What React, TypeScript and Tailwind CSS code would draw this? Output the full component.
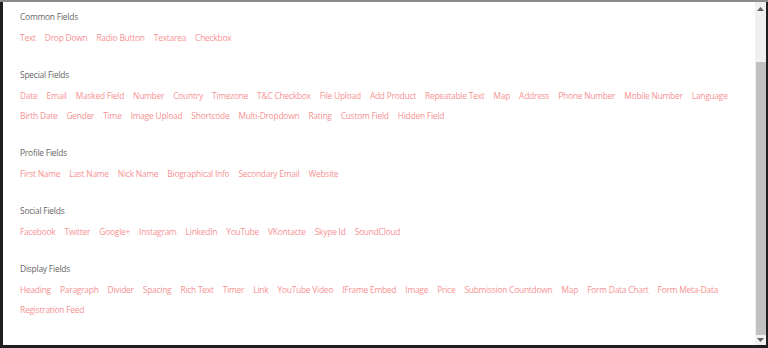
const sections: { title: string; rows: string[][] }[] = [
  {
    title: "Common Fields",
    rows: [["Text", "Drop Down", "Radio Button", "Textarea", "Checkbox"]],
  },
  {
    title: "Special Fields",
    rows: [
      [
        "Date",
        "Email",
        "Masked Field",
        "Number",
        "Country",
        "Timezone",
        "T&C Checkbox",
        "File Upload",
        "Add Product",
        "Repeatable Text",
        "Map",
        "Address",
        "Phone Number",
        "Mobile Number",
        "Language",
      ],
      [
        "Birth Date",
        "Gender",
        "Time",
        "Image Upload",
        "Shortcode",
        "Multi-Dropdown",
        "Rating",
        "Custom Field",
        "Hidden Field",
      ],
    ],
  },
  {
    title: "Profile Fields",
    rows: [
      ["First Name", "Last Name", "Nick Name", "Biographical Info", "Secondary Email", "Website"],
    ],
  },
  {
    title: "Social Fields",
    rows: [
      ["Facebook", "Twitter", "Google+", "Instagram", "LinkedIn", "YouTube", "VKontacte", "Skype Id", "SoundCloud"],
    ],
  },
  {
    title: "Display Fields",
    rows: [
      [
        "Heading",
        "Paragraph",
        "Divider",
        "Spacing",
        "Rich Text",
        "Timer",
        "Link",
        "YouTube Video",
        "IFrame Embed",
        "Image",
        "Price",
        "Submission Countdown",
        "Map",
        "Form Data Chart",
        "Form Meta-Data",
      ],
      ["Registration Feed"],
    ],
  },
];

function Scrollbar() {
  return (
    <div className="w-[11px] shrink-0 bg-[#f0f0f0] flex flex-col items-center">
      <div className="h-[14px] flex items-center justify-center">
        <svg width="7" height="4" viewBox="0 0 7 4">
          <path d="M0 4 L3.5 0 L7 4 Z" fill="#606060" />
        </svg>
      </div>
      <div className="h-[46px]" />
      <div className="w-[10px] h-[273px] bg-[#c1c1c1]" />
      <div className="flex-1 flex items-center justify-center">
        <svg width="7" height="4" viewBox="0 0 7 4">
          <path d="M0 0 L7 0 L3.5 4 Z" fill="#606060" />
        </svg>
      </div>
    </div>
  );
}

export default function App() {
  return (
    <div
      className="w-[768px] h-[348px] bg-[#1f1f1f] flex border-t-2 border-t-[#8c8c8c] pl-[3px] pr-[2px] pb-[3px] overflow-hidden"
      style={{ fontFamily: '"Open Sans", "Noto Sans", sans-serif' }}
    >
      <div className="flex-1 min-w-0 overflow-hidden bg-white pl-[17px] pt-[7px] flex flex-col gap-[17px]">
        {sections.map((s) => (
          <div key={s.title} className="flex flex-col">
            <div className="h-[16px] leading-[16px] text-[8.4px] tracking-[-0.2px] text-[#666666]">{s.title}</div>
            <div className="mt-[5px] flex flex-col">
              {s.rows.map((row, i) => (
                <div
                  key={i}
                  className="flex gap-x-[9px] h-[20px] leading-[16px] text-[8.4px] tracking-[-0.22px] text-[#f79292]"
                >
                  {row.map((f) => (
                    <span key={f} className="whitespace-nowrap">
                      {f}
                    </span>
                  ))}
                </div>
              ))}
            </div>
          </div>
        ))}
      </div>
      <Scrollbar />
    </div>
  );
}
